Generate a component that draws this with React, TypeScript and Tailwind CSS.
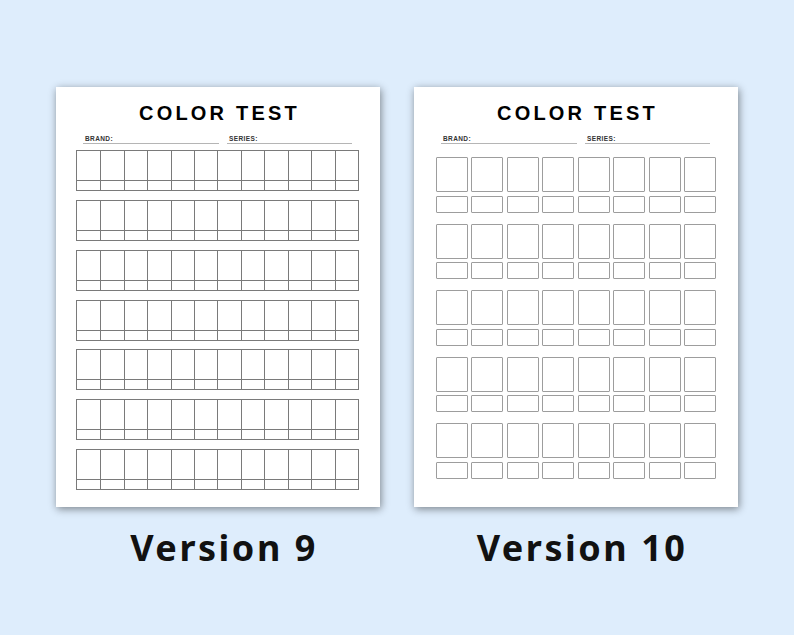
const sheetFont = { fontFamily: '"Liberation Sans", Arial, sans-serif' }

function SheetHeader() {
  return (
    <div style={sheetFont}>
      <h1 className="mt-[14px] text-center text-[20px] font-bold leading-[24px] tracking-[0.16em] text-black pl-[3px]">
        COLOR TEST
      </h1>
      <div className="mt-[10px] flex gap-[8px] px-[27px]">
        <div className="w-[136px] border-b border-[#b5b5b5] pl-[2px] text-[6.5px] font-bold leading-[8px] tracking-[0.06em] text-[#333]">
          BRAND:
        </div>
        <div className="w-[125px] border-b border-[#b5b5b5] pl-[2px] text-[6.5px] font-bold leading-[8px] tracking-[0.06em] text-[#333]">
          SERIES:
        </div>
      </div>
    </div>
  )
}

function Version9Sheet() {
  const blocks = Array.from({ length: 7 })
  const cols = Array.from({ length: 12 })
  return (
    <div className="flex h-[420px] w-[324px] flex-col bg-white shadow-[1px_2px_8px_rgba(0,0,0,0.45)]">
      <SheetHeader />
      <div className="mt-[6px] flex flex-col gap-[8.85px] pl-[20px] pr-[21px]">
        {blocks.map((_, b) => (
          <div key={b} className="grid h-[41px] grid-cols-12 border border-[#7a7a7a]">
            {cols.map((_, c) => (
              <div
                key={c}
                className={
                  c === 0
                    ? "flex flex-col"
                    : "flex flex-col border-l border-[#7a7a7a]"
                }
              >
                <div className="flex-1" />
                <div className="h-[10px] border-t border-[#7a7a7a]" />
              </div>
            ))}
          </div>
        ))}
      </div>
    </div>
  )
}

function Version10Sheet() {
  const sets = Array.from({ length: 5 })
  const cols = Array.from({ length: 8 })
  return (
    <div className="flex h-[420px] w-[324px] flex-col bg-white shadow-[1px_2px_8px_rgba(0,0,0,0.45)]">
      <SheetHeader />
      <div className="mt-[13px] flex flex-col gap-[11px] pl-[22px] pr-[22px]">
        {sets.map((_, s) => (
          <div key={s} className="flex flex-col gap-[3.5px]">
            <div className="grid grid-cols-8 gap-x-[3.5px]">
              {cols.map((_, c) => (
                <div key={c} className="h-[35px] rounded-[1px] border border-[#9d9d9d]" />
              ))}
            </div>
            <div className="grid grid-cols-8 gap-x-[3.5px]">
              {cols.map((_, c) => (
                <div key={c} className="h-[17px] rounded-[1px] border border-[#9d9d9d]" />
              ))}
            </div>
          </div>
        ))}
      </div>
    </div>
  )
}

function Label({ text }: { text: string }) {
  return (
    <div
      className="mt-[23px] pl-[12px] text-center text-[36px] font-bold leading-none tracking-[0.07em] text-[#111]"
      style={{ fontFamily: '"Noto Sans", sans-serif' }}
    >
      {text}
    </div>
  )
}

export default function App() {
  return (
    <div className="flex h-[635px] w-[794px] justify-center gap-[34px] overflow-hidden bg-[#deedfc] pt-[87px]">
      <div className="flex flex-col">
        <Version9Sheet />
        <Label text="Version 9" />
      </div>
      <div className="flex flex-col">
        <Version10Sheet />
        <Label text="Version 10" />
      </div>
    </div>
  )
}
